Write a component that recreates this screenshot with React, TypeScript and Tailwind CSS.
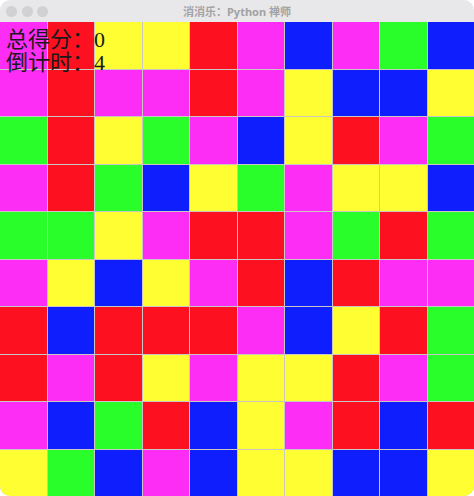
const M = 'bg-[#fd2df5]';
const R = 'bg-[#fd1020]';
const Y = 'bg-[#fefe33]';
const G = 'bg-[#2afe2a]';
const B = 'bg-[#0e1efd]';

const board: string[][] = [
  [M, R, Y, Y, R, M, B, M, G, B],
  [M, R, M, M, R, M, Y, B, B, Y],
  [G, R, Y, G, M, B, Y, R, M, G],
  [M, R, G, B, Y, G, M, Y, Y, B],
  [G, G, Y, M, R, R, M, G, R, G],
  [M, Y, B, Y, M, R, B, R, M, M],
  [R, B, R, R, R, M, B, Y, R, G],
  [R, M, R, Y, M, Y, Y, R, M, G],
  [M, B, G, R, B, Y, M, R, B, R],
  [Y, G, B, M, B, Y, Y, B, B, Y],
];

export default function App() {
  return (
    <div className="w-[474px] h-[496px] bg-white rounded-[10px] overflow-hidden flex flex-col">
      {/* title bar */}
      <div className="relative h-[22px] bg-[#e8e7e9] flex items-center justify-center shrink-0">
        <div className="absolute left-[6px] top-[6px] flex gap-[4.5px]">
          <span className="w-[11px] h-[11px] rounded-full bg-[#d1d0d2]" />
          <span className="w-[11px] h-[11px] rounded-full bg-[#d1d0d2]" />
          <span className="w-[11px] h-[11px] rounded-full bg-[#d1d0d2]" />
        </div>
        <span
          className="text-[11px] font-bold text-[#a3a2a4] leading-none"
          style={{ fontFamily: '"Noto Sans", "Noto Sans CJK SC", sans-serif' }}
        >
          消消乐：Python 禅师
        </span>
      </div>

      {/* board */}
      <div className="relative flex-1">
        <div className="grid grid-cols-10 grid-rows-10 gap-px bg-[#c9c6c4] h-full w-full">
          {board.flat().map((c, i) => (
            <div key={i} className={c} />
          ))}
        </div>
        <div
          className="absolute left-[6px] top-[6px] text-[22px] leading-[23px] text-[#1a1a1a]"
          style={{ fontFamily: '"Liberation Serif", "Noto Sans CJK SC", serif' }}
        >
          <div>总得分：0</div>
          <div>倒计时：4</div>
        </div>
      </div>
    </div>
  );
}
